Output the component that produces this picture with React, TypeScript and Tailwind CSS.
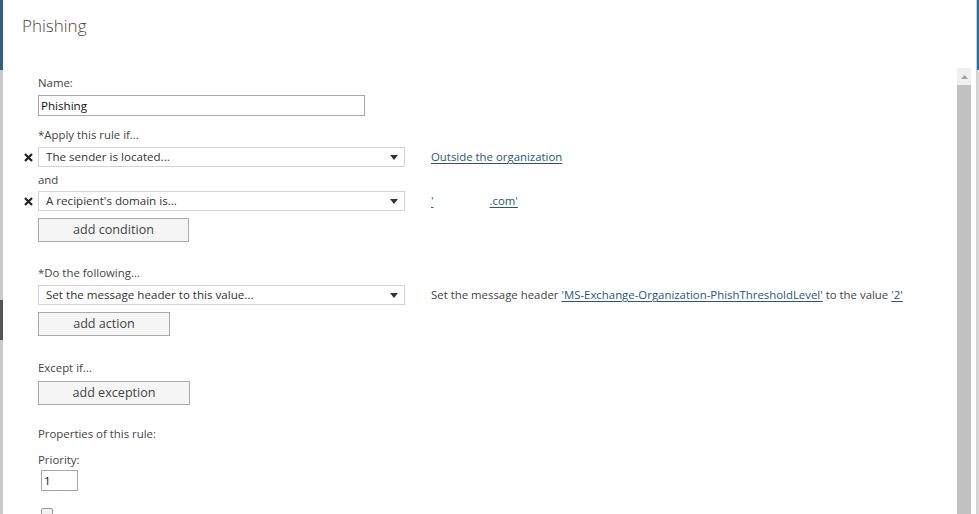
import React from "react";

const font = { fontFamily: '"Open Sans", "Noto Sans", sans-serif' };

function Arrow() {
  return (
    <svg width="8" height="5" viewBox="0 0 8 5" className="shrink-0">
      <path d="M0 0 L8 0 L4 5 Z" fill="#333" />
    </svg>
  );
}

function RemoveIcon() {
  return (
    <svg width="9" height="9" viewBox="0 0 9 9" className="shrink-0">
      <path d="M1 1 L8 8 M8 1 L1 8" stroke="#222" strokeWidth="2.2" strokeLinecap="butt" />
    </svg>
  );
}

function Select({ value }: { value: string }) {
  return (
    <div className="flex items-center justify-between w-[367px] h-[20px] border border-[#d4d4d4] bg-white pl-[7px] pr-[6px] text-[11.6px] text-[#333] shrink-0">
      <span>{value}</span>
      <Arrow />
    </div>
  );
}

function Button({ label, w, mt }: { label: string; w: string; mt: string }) {
  return (
    <div
      className={`${w} ${mt} shrink-0 h-[24px] flex items-center justify-center border border-[#ababab] bg-[#f5f5f5] text-[12.6px] text-[#444]`}
    >
      {label}
    </div>
  );
}

const link = "text-[#2a5677] underline underline-offset-2";

export default function App() {
  return (
    <div className="w-[979px] h-[514px] overflow-hidden bg-white flex" style={font}>
      {/* left edge of the page behind */}
      <div className="w-[3px] flex flex-col">
        <div className="h-[70px] bg-[#2f5f86]" />
        <div className="flex-1 bg-[#c9c9c9]" />
        <div className="h-[40px] bg-[#555]" />
        <div className="h-[174px] bg-[#c9c9c9]" />
      </div>

      <div className="flex-1 flex flex-col min-h-0">
        <div className="h-[68px] shrink-0 pl-[19px] pt-[12px]">
          <h1 className="text-[17px] font-light text-[#444] leading-[28px]">Phishing</h1>
        </div>

        <div className="flex-1 min-h-0 flex overflow-hidden">
          {/* form */}
          <div className="flex-1 flex flex-col pl-[35px] pt-[7px] text-[11.4px] text-[#444] leading-[16px]">
            <div>Name:</div>
            <div className="mt-[4px] shrink-0 w-[327px] h-[21px] border border-[#a6a6a6] pl-[2px] flex items-center text-[11.6px] text-[#111]">
              Phishing
            </div>

            <div className="mt-[11px]">*Apply this rule if...</div>
            <div className="mt-[4px] shrink-0 flex items-center -ml-[15px]">
              <div className="w-[15px] flex items-center pl-[1px]">
                <RemoveIcon />
              </div>
              <Select value="The sender is located..." />
              <a className={`ml-[26px] ${link}`}>Outside the organization</a>
            </div>

            <div className="mt-[5px]">and</div>
            <div className="mt-[3px] shrink-0 flex items-center -ml-[15px]">
              <div className="w-[15px] flex items-center pl-[1px]">
                <RemoveIcon />
              </div>
              <Select value="A recipient's domain is..." />
              <a className={`ml-[26px] ${link}`}>'</a>
              <a className={`ml-[56px] ${link}`}>.com'</a>
            </div>

            <Button label="add condition" w="w-[151px]" mt="mt-[7px]" />

            <div className="mt-[23px]">*Do the following...</div>
            <div className="mt-[4px] shrink-0 flex items-center">
              <Select value="Set the message header to this value..." />
              <span className="ml-[26px] text-[#444]">
                Set the message header <a className={link}>'MS-Exchange-Organization-PhishThresholdLevel'</a> to the
                value <a className={link}>'2'</a>
              </span>
            </div>

            <Button label="add action" w="w-[132px]" mt="mt-[7px]" />

            <div className="mt-[24px]">Except if...</div>
            <Button label="add exception" w="w-[152px]" mt="mt-[5px]" />

            <div className="mt-[21px]">Properties of this rule:</div>
            <div className="mt-[10px]">Priority:</div>
            <div className="mt-[2px] shrink-0 ml-[3px] w-[37px] h-[21px] border border-[#a6a6a6] pl-[2px] flex items-center text-[11.6px] text-[#111]">
              1
            </div>
            <div className="mt-[17px] shrink-0 ml-[3px] w-[12px] h-[12px] border border-[#999] rounded-[2px] bg-[#f3f3f3]" />
          </div>

          {/* scrollbar */}
          <div className="w-[14px] flex flex-col">
            <div className="h-[17px] bg-[#f0f0f0] flex items-center justify-center">
              <svg width="7" height="4" viewBox="0 0 7 4">
                <path d="M0 4 L3.5 0 L7 4 Z" fill="#a3a3a3" />
              </svg>
            </div>
            <div className="flex-1 bg-[#c1c1c1]" />
          </div>
        </div>
      </div>

      <div className="w-[5px]" />
      <div className="w-[1px] bg-[#cfcfcf]" />
      <div className="w-[2px] flex flex-col">
        <div className="h-[70px] bg-[#2f6a94]" />
        <div className="flex-1 bg-[#d8d8d8]" />
      </div>
    </div>
  );
}
